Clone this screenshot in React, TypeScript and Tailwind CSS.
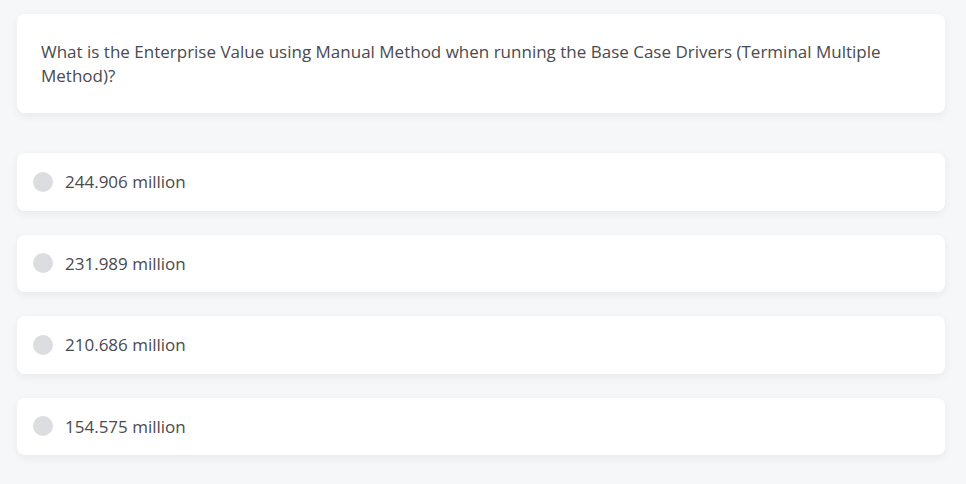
import React from 'react';

const options = ['244.906 million', '231.989 million', '210.686 million', '154.575 million'];

const App = () => {
  return (
    <div className="min-h-[484px] bg-[#f6f7f9] pl-[17px] pr-[21px] pt-[14px] pb-6 font-['Open_Sans',sans-serif] text-[#4a4a4f]">
      <div className="rounded-lg bg-white px-6 pt-[26px] pb-[25px] text-[17px] leading-6 shadow-[0_3px_10px_rgba(0,0,0,0.06)]">
        What is the Enterprise Value using Manual Method when running the Base Case Drivers (Terminal Multiple Method)?
      </div>

      <div className="mt-10 flex flex-col gap-6">
        {options.map((opt) => (
          <label
            key={opt}
            className="flex h-[57.5px] cursor-pointer items-center gap-3 rounded-lg bg-white px-4 text-[17px] shadow-[0_3px_10px_rgba(0,0,0,0.06)]"
          >
            <span className="h-5 w-5 shrink-0 rounded-full bg-[#dcdde0]" />
            <span>{opt}</span>
          </label>
        ))}
      </div>
    </div>
  );
};

export default App;
